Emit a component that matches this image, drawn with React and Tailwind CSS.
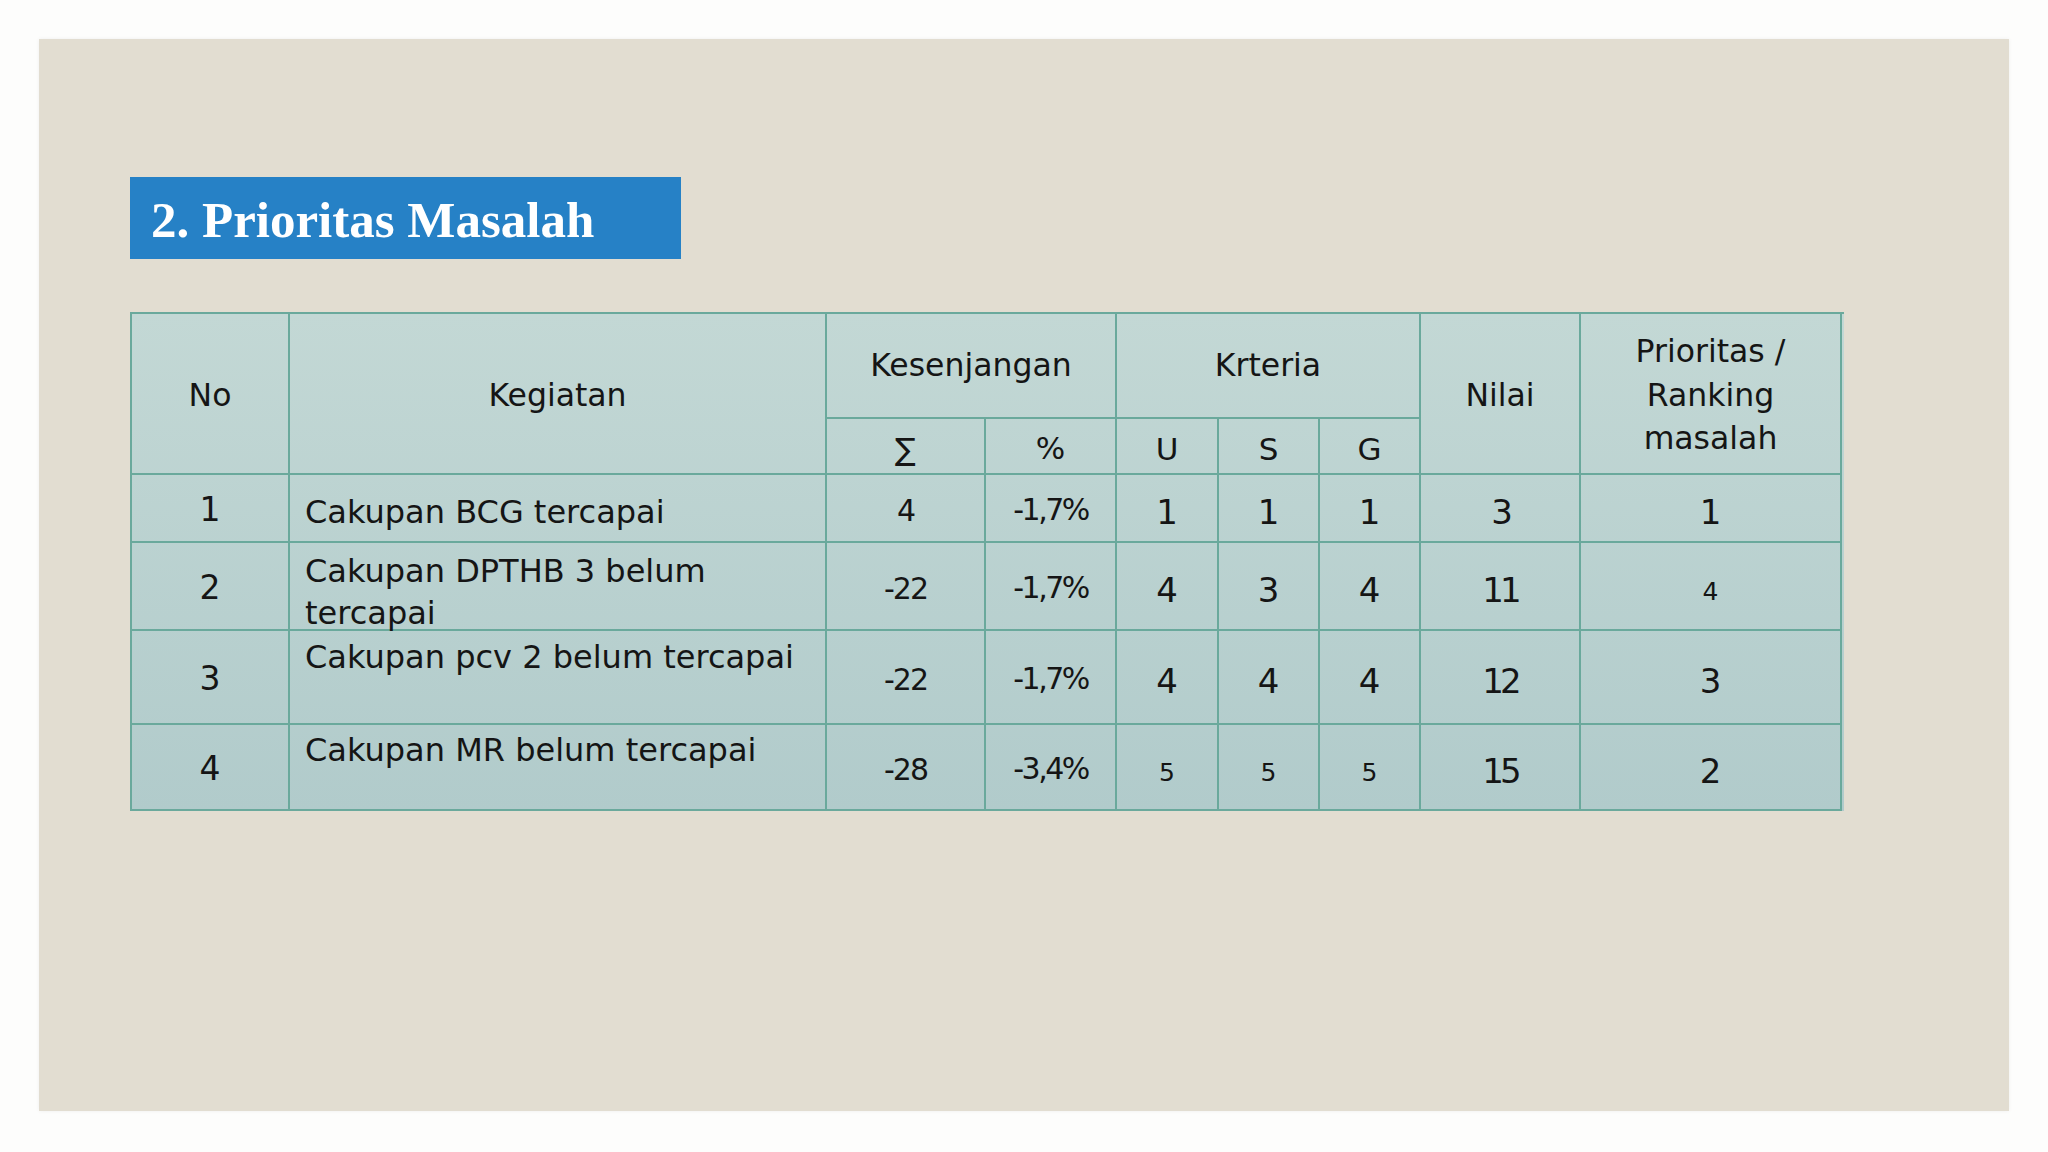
import React from "react";

const font = { fontFamily: '"DejaVu Sans", "Liberation Sans", sans-serif' };

function Cell({ className = "", children }) {
  return (
    <div
      className={
        "border-r-2 border-b-2 border-[#6aa99c] flex text-[#151515] " + className
      }
    >
      {children}
    </div>
  );
}

const rows = [
  {
    no: "1",
    kegiatan: "Cakupan BCG tercapai",
    kcls: "items-center pt-[8px]",
    sum: "4",
    pct: "-1,7%",
    u: "1",
    s: "1",
    g: "1",
    usgSmall: false,
    nilai: "3",
    rank: "1",
    rankSmall: false,
  },
  {
    no: "2",
    kegiatan: (
      <>
        Cakupan DPTHB 3 belum
        <br />
        tercapai
      </>
    ),
    kcls: "items-start pt-[7px]",
    sum: "-22",
    pct: "-1,7%",
    u: "4",
    s: "3",
    g: "4",
    usgSmall: false,
    nilai: "11",
    rank: "4",
    rankSmall: true,
  },
  {
    no: "3",
    kegiatan: "Cakupan pcv 2 belum tercapai",
    kcls: "items-start pt-[5px]",
    sum: "-22",
    pct: "-1,7%",
    u: "4",
    s: "4",
    g: "4",
    usgSmall: false,
    nilai: "12",
    rank: "3",
    rankSmall: false,
  },
  {
    no: "4",
    kegiatan: "Cakupan MR belum tercapai",
    kcls: "items-start pt-[4px]",
    sum: "-28",
    pct: "-3,4%",
    u: "5",
    s: "5",
    g: "5",
    usgSmall: true,
    nilai: "15",
    rank: "2",
    rankSmall: false,
  },
];

export default function App() {
  const center = "items-center justify-center text-center";
  return (
    <div className="w-[2048px] h-[1152px] bg-[#fdfdfc] pt-[39px] pl-[39px]">
      <div className="w-[1970px] h-[1072px] bg-[#e2ddd1] shadow-[0_0_4px_rgba(0,0,0,0.06)] pt-[138px] pl-[91px]">
        <div className="w-[551px] h-[82px] bg-[#2681c6] pl-[21px] overflow-hidden">
          <span
            className="block text-white font-bold text-[51px] leading-[86px] whitespace-nowrap"
            style={{ fontFamily: '"Liberation Serif", "Times New Roman", serif' }}
          >
            2. Prioritas Masalah
          </span>
        </div>

        <div
          className="mt-[53px] w-[1714px] grid grid-cols-[158px_537px_159px_131px_102px_101px_101px_160px_261px] grid-rows-[105px_56px_68px_88px_94px_86px] border-l-2 border-t-2 border-[#6aa99c] bg-gradient-to-b from-[#c3d8d5] to-[#b1cbcb]"
          style={font}
        >
          {/* header */}
          <Cell className={"row-span-2 text-[31.5px] pt-[4px] " + center}>No</Cell>
          <Cell className={"row-span-2 text-[31.5px] pt-[4px] " + center}>Kegiatan</Cell>
          <Cell className={"col-span-2 text-[31.5px] " + center}>Kesenjangan</Cell>
          <Cell className={"col-span-3 text-[31.5px] " + center}>Krteria</Cell>
          <Cell className={"row-span-2 text-[31.5px] pt-[4px] " + center}>Nilai</Cell>
          <Cell className={"row-span-2 text-[31.5px] leading-[43.5px] pt-[4px] " + center}>
            <span>
              Prioritas /
              <br />
              Ranking
              <br />
              masalah
            </span>
          </Cell>
          <Cell className={"text-[31px] pt-[6px] " + center}>∑</Cell>
          <Cell className={"text-[31px] pt-[4px] " + center}>%</Cell>
          <Cell className={"text-[31px] pt-[6px] " + center}>U</Cell>
          <Cell className={"text-[31px] pt-[6px] " + center}>S</Cell>
          <Cell className={"text-[31px] pt-[6px] " + center}>G</Cell>

          {rows.map((r) => (
            <React.Fragment key={r.no}>
              <Cell className={"text-[33px] pt-[4px] " + center}>{r.no}</Cell>
              <Cell className={"pl-[15px] text-[32px] leading-[42px] whitespace-nowrap " + r.kcls}>
                <span>{r.kegiatan}</span>
              </Cell>
              <Cell className={"text-[30px] tracking-[-2px] pt-[4px] " + center}>{r.sum}</Cell>
              <Cell className={"text-[30px] tracking-[-2.5px] pt-[2px] " + center}>{r.pct}</Cell>
              {[r.u, r.s, r.g].map((v, i) => (
                <Cell
                  key={i}
                  className={
                    (r.usgSmall ? "text-[25px] pt-[12px] " : "text-[34px] pt-[8px] ") + center
                  }
                >
                  {v}
                </Cell>
              ))}
              <Cell className={"text-[34px] tracking-[-4px] pt-[8px] " + center}>{r.nilai}</Cell>
              <Cell
                className={
                  (r.rankSmall ? "text-[25px] pt-[12px] " : "text-[34px] pt-[8px] ") + center
                }
              >
                {r.rank}
              </Cell>
            </React.Fragment>
          ))}
        </div>
      </div>
    </div>
  );
}
